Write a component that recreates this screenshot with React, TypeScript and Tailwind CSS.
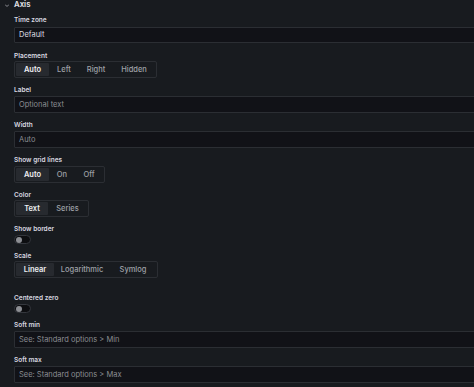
import React from "react";

const Label = ({ text }: { text: string }) => (
  <div className="h-[8px] leading-[8px] text-[6.5px] font-semibold text-[#d8d9e0] mb-[2px]">{text}</div>
);

const Input = ({ value, placeholder }: { value?: string; placeholder?: string }) => (
  <div className="h-[17px] w-[540px] rounded-[1px] border border-[#2b2e33] bg-[#111217] pl-[4px] flex items-center text-[7.5px] leading-none">
    {value ? (
      <span className="text-[#d8d9de]">{value}</span>
    ) : (
      <span className="text-[#8b8d92]">{placeholder}</span>
    )}
  </div>
);

const Radio = ({ options, widths }: { options: string[]; widths: string[] }) => (
  <div className="flex h-[17px] items-stretch rounded-[2px] border border-[#2b2e33] p-[1px]">
    {options.map((o, i) => (
      <div
        key={o}
        className={`${widths[i]} flex items-center justify-center rounded-[1px] text-[7.5px] leading-none ${
          i === 0 ? "bg-[#272a2f] text-[#eeeef2] font-semibold" : "text-[#9fa1a7] font-medium"
        }`}
      >
        {o}
      </div>
    ))}
  </div>
);

const Toggle = () => (
  <div className="h-[9px] w-[17px] rounded-full border border-[#34373d] bg-[#0d0e11] flex items-center pl-[1px]">
    <div className="h-[6px] w-[6px] rounded-full bg-[#8d8f94]" />
  </div>
);

export default function App() {
  return (
    <div className="h-[387px] w-full overflow-hidden bg-[#181b1f]" style={{ fontFamily: "Inter, 'Noto Sans', sans-serif" }}>
      <div className="flex h-[10px] items-center">
        <svg width="4" height="3" viewBox="0 0 4 3" className="ml-[5px] mr-[5px]">
          <path d="M0 0.5 L2 2.5 L4 0.5" stroke="#9a9ca2" strokeWidth="0.9" fill="none" />
        </svg>
        <span className="text-[7.8px] font-semibold text-[#e6e6ea] leading-none">Axis</span>
      </div>
      <div className="pl-[14px] pt-[6px] flex flex-col items-start">
        <div className="mb-[9px] flex flex-col items-start">
          <div className="h-[8px] leading-[8px] text-[6.5px] font-semibold text-[#d8d9e0] mb-[3px]">Time zone</div>
          <div className="h-[16px] w-[540px] rounded-[1px] border border-[#2b2e33] bg-[#111217] pl-[4px] flex items-center text-[7.5px] leading-none text-[#dcdde2]">
            Default
          </div>
        </div>
        <div className="mb-[8px] flex flex-col items-start">
          <div className="h-[8px] leading-[8px] text-[6.5px] font-semibold text-[#d8d9e0] mb-[1px]">Placement</div>
          <Radio options={["Auto", "Left", "Right", "Hidden"]} widths={["w-[33px]", "w-[30px]", "w-[34px]", "w-[42px]"]} />
        </div>
        <div className="mb-[8px] flex flex-col items-start">
          <Label text="Label" />
          <Input placeholder="Optional text" />
        </div>
        <div className="mb-[8px] flex flex-col items-start">
          <Label text="Width" />
          <Input placeholder="Auto" />
        </div>
        <div className="mb-[8px] flex flex-col items-start">
          <Label text="Show grid lines" />
          <Radio options={["Auto", "On", "Off"]} widths={["w-[33px]", "w-[26px]", "w-[28px]"]} />
        </div>
        <div className="mb-[8px] flex flex-col items-start">
          <div className="h-[8px] leading-[8px] text-[6.5px] font-semibold text-[#d8d9e0] mb-[1px]">Color</div>
          <Radio options={["Text", "Series"]} widths={["w-[32px]", "w-[39px]"]} />
        </div>
        <div className="mb-[8px] flex flex-col items-start">
          <Label text="Show border" />
          <Toggle />
        </div>
        <div className="mb-[16px] flex flex-col items-start">
          <div className="h-[8px] leading-[8px] text-[6.5px] font-semibold text-[#d8d9e0] mb-[1px]">Scale</div>
          <Radio options={["Linear", "Logarithmic", "Symlog"]} widths={["w-[38px]", "w-[56px]", "w-[46px]"]} />
        </div>
        <div className="mb-[8px] flex flex-col items-start">
          <Label text="Centered zero" />
          <Toggle />
        </div>
        <div className="mb-[8px] flex flex-col items-start">
          <Label text="Soft min" />
          <Input placeholder="See: Standard options > Min" />
        </div>
        <div className="flex flex-col items-start">
          <Label text="Soft max" />
          <Input placeholder="See: Standard options > Max" />
        </div>
      </div>
    </div>
  );
}
